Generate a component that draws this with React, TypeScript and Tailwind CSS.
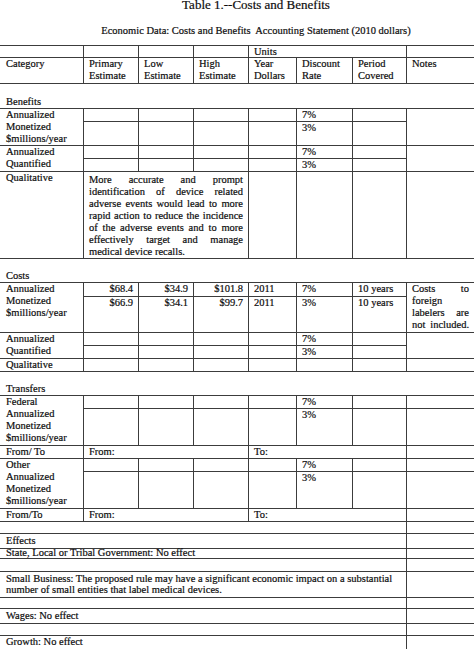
import type { ReactNode, TdHTMLAttributes } from "react"

type CellProps = TdHTMLAttributes<HTMLTableCellElement> & { children?: ReactNode; bottom?: boolean }

// cell with top + left rule
function Td({ children, className = "", bottom, ...props }: CellProps) {
  return (
    <td
      className={`border-t border-l border-[#3c3c3c] px-[5px] ${bottom ? "align-bottom" : "align-top"} ${className}`}
      {...props}
    >
      {children}
    </td>
  )
}

// first column: no left rule
function Th({ children, className = "", bottom, ...props }: CellProps) {
  return (
    <td
      className={`border-t border-[#3c3c3c] pl-[6px] pr-[2px] ${bottom ? "align-bottom" : "align-top"} ${className}`}
      {...props}
    >
      {children}
    </td>
  )
}

function J({ children }: { children: ReactNode }) {
  return <div className="text-justify [text-align-last:justify]">{children}</div>
}

function Blank({ count }: { count: number }) {
  return (
    <>
      {Array.from({ length: count }).map((_, i) => (
        <Td key={i} />
      ))}
    </>
  )
}

export default function App() {
  return (
    <div className="w-[474px] h-[649px] overflow-hidden bg-white text-[#0d0d0d] font-['Liberation_Serif',serif] [-webkit-text-stroke:0.2px_#0d0d0d]">
      <div className="w-[512px]">
        <div className="h-[12px] text-center text-[13px] leading-[10px]">Table 1.--Costs and Benefits</div>
        <div className="mt-[13px] h-[12px] text-center text-[10.5px] leading-[12px]">
          Economic Data: Costs and Benefits&nbsp; Accounting Statement (2010 dollars)
        </div>
      </div>

      <table className="mt-[8px] w-[475px] table-fixed border-separate border-spacing-0 text-[10.5px] leading-[12px]">
        <colgroup>
          <col className="w-[83px]" />
          <col className="w-[55px]" />
          <col className="w-[55px]" />
          <col className="w-[55px]" />
          <col className="w-[48px]" />
          <col className="w-[56px]" />
          <col className="w-[54px]" />
          <col className="w-[69px]" />
        </colgroup>
        <tbody>
          {/* units */}
          <tr className="h-[12px] leading-[11px]">
            <Th />
            <Td />
            <Td />
            <Td />
            <Td colSpan={3}>Units</Td>
            <Td />
          </tr>
          <tr className="h-[26px]">
            <Th>Category</Th>
            <Td>Primary Estimate</Td>
            <Td>Low Estimate</Td>
            <Td>High Estimate</Td>
            <Td>Year Dollars</Td>
            <Td>Discount Rate</Td>
            <Td>Period Covered</Td>
            <Td>Notes</Td>
          </tr>

          {/* benefits */}
          <tr className="h-[25px]">
            <Th colSpan={8} bottom>
              Benefits
            </Th>
          </tr>
          <tr className="h-[13px]">
            <Th rowSpan={2}>
              <div>Annualized</div>
              <div>Monetized</div>
              <div>$millions/year</div>
            </Th>
            <Blank count={4} />
            <Td>7%</Td>
            <Td />
            <Td rowSpan={2} />
          </tr>
          <tr className="h-[24px]">
            <Blank count={4} />
            <Td>3%</Td>
            <Td />
          </tr>
          <tr className="h-[13px]">
            <Th rowSpan={2}>
              <div>Annualized</div>
              <div>Quantified</div>
            </Th>
            <Blank count={4} />
            <Td>7%</Td>
            <Td />
            <Td rowSpan={2} />
          </tr>
          <tr className="h-[13px]">
            <Blank count={4} />
            <Td>3%</Td>
            <Td />
          </tr>
          <tr className="h-[87px]">
            <Th>Qualitative</Th>
            <Td colSpan={3} className="pt-[2px]">
              <J>More accurate and prompt</J>
              <J>identification of device related</J>
              <J>adverse events would lead to more</J>
              <J>rapid action to reduce the incidence</J>
              <J>of the adverse events and to more</J>
              <J>effectively target and manage</J>
              <div>medical device recalls.</div>
            </Td>
            <Blank count={4} />
          </tr>

          {/* costs */}
          <tr className="h-[24px]">
            <Th colSpan={8} bottom>
              Costs
            </Th>
          </tr>
          <tr className="h-[14px]">
            <Th rowSpan={2}>
              <div>Annualized</div>
              <div>Monetized</div>
              <div>$millions/year</div>
            </Th>
            <Td className="text-right">$68.4</Td>
            <Td className="text-right">$34.9</Td>
            <Td className="text-right">$101.8</Td>
            <Td>2011</Td>
            <Td>7%</Td>
            <Td>10 years</Td>
            <Td rowSpan={2} className="pr-[6px]">
              <J>Costs to</J>
              <div>foreign</div>
              <J>labelers are</J>
              <J>not included.</J>
            </Td>
          </tr>
          <tr className="h-[36px]">
            <Td className="text-right">$66.9</Td>
            <Td className="text-right">$34.1</Td>
            <Td className="text-right">$99.7</Td>
            <Td>2011</Td>
            <Td>3%</Td>
            <Td>10 years</Td>
          </tr>
          <tr className="h-[13px]">
            <Th rowSpan={2}>
              <div>Annualized</div>
              <div>Quantified</div>
            </Th>
            <Blank count={4} />
            <Td>7%</Td>
            <Td />
            <Td rowSpan={2} />
          </tr>
          <tr className="h-[13px]">
            <Blank count={4} />
            <Td>3%</Td>
            <Td />
          </tr>
          <tr className="h-[13px]">
            <Th>Qualitative</Th>
            <Blank count={7} />
          </tr>

          {/* transfers */}
          <tr className="h-[24px]">
            <Th colSpan={8} bottom>
              Transfers
            </Th>
          </tr>
          <tr className="h-[13px]">
            <Th rowSpan={2}>
              <div>Federal</div>
              <div>Annualized</div>
              <div>Monetized</div>
              <div>$millions/year</div>
            </Th>
            <Blank count={4} />
            <Td>7%</Td>
            <Td />
            <Td />
          </tr>
          <tr className="h-[37px]">
            <Blank count={4} />
            <Td>3%</Td>
            <Td />
            <Td />
          </tr>
          <tr className="h-[13px]">
            <Th>From/ To</Th>
            <Td colSpan={3}>From:</Td>
            <Td colSpan={3}>To:</Td>
            <Td />
          </tr>
          <tr className="h-[13px]">
            <Th rowSpan={2}>
              <div>Other</div>
              <div>Annualized</div>
              <div>Monetized</div>
              <div>$millions/year</div>
            </Th>
            <Blank count={4} />
            <Td>7%</Td>
            <Td />
            <Td />
          </tr>
          <tr className="h-[37px]">
            <Blank count={4} />
            <Td>3%</Td>
            <Td />
            <Td />
          </tr>
          <tr className="h-[13px]">
            <Th>From/To</Th>
            <Td colSpan={3}>From:</Td>
            <Td colSpan={3}>To:</Td>
            <Td />
          </tr>

          {/* effects */}
          <tr className="h-[12px]">
            <Th colSpan={7} />
            <Td />
          </tr>
          <tr className="h-[15px]">
            <Th colSpan={7} className="pt-[1px]">
              Effects
            </Th>
            <Td />
          </tr>
          <tr className="h-[10px]">
            <Th colSpan={7} className="leading-[7px]">
              State, Local or Tribal Government: No effect
            </Th>
            <Td />
          </tr>
          <tr className="h-[13px]">
            <Th colSpan={7} />
            <Td />
          </tr>
          <tr className="h-[26px]">
            <Th colSpan={7} className="pt-[1px] leading-[11px]">
              Small Business: The proposed rule may have a significant economic impact on a substantial number
              of small entities that label medical devices.
            </Th>
            <Td />
          </tr>
          <tr className="h-[11px]">
            <Th colSpan={7} />
            <Td />
          </tr>
          <tr className="h-[15px]">
            <Th colSpan={7} className="pt-[1px]">
              Wages: No effect
            </Th>
            <Td />
          </tr>
          <tr className="h-[12px]">
            <Th colSpan={7} />
            <Td />
          </tr>
          <tr className="h-[20px]">
            <Th colSpan={7}>Growth: No effect</Th>
            <Td />
          </tr>
        </tbody>
      </table>
    </div>
  )
}
